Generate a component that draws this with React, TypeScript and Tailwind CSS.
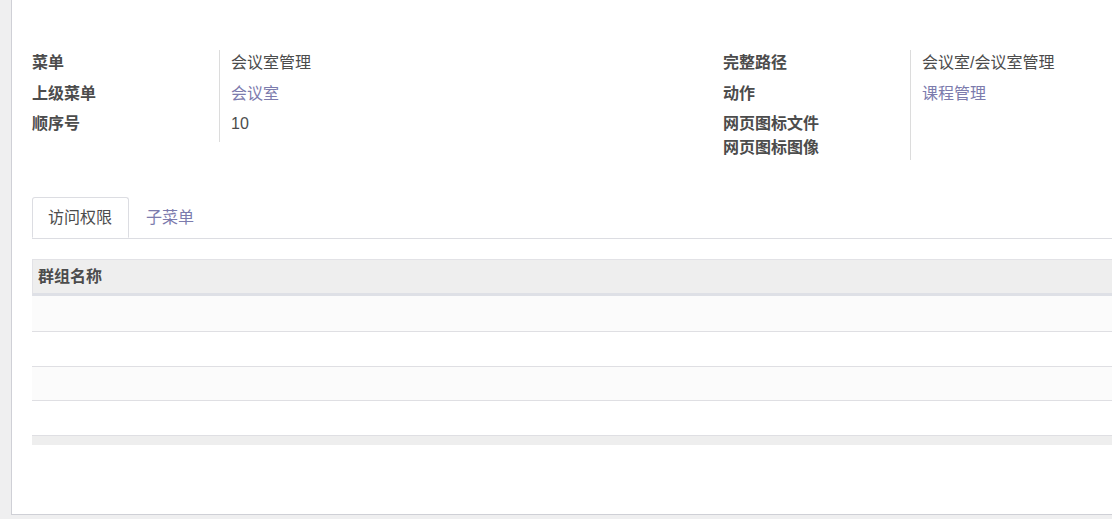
import React from "react";

const font = {
  fontFamily: '"Liberation Sans", "Noto Sans CJK SC", sans-serif',
};

function Label({ text, h, pt }: { text: string; h: string; pt: string }) {
  return (
    <div className={`${h} ${pt} text-[16px] leading-[21px] font-bold text-[#4c4c4c]`}>{text}</div>
  );
}

export default function App() {
  return (
    <div
      className="flex w-[1112px] h-[519px] overflow-hidden bg-[#efeff0]"
      style={font}
    >
      <div className="w-[11px] shrink-0" />
      <div className="w-[1420px] shrink-0 h-[515px] bg-white border-l border-b border-[#cfd0d6] pt-[50px] pl-[20px]">
        {/* info groups */}
        <div className="flex items-start">
          <div className="w-[691px] flex items-start">
            <div className="w-[187px]">
              <Label text="菜单" h="h-[31px]" pt="pt-[2px]" />
              <Label text="上级菜单" h="h-[31px]" pt="pt-[2px]" />
              <Label text="顺序号" h="h-[31px]" pt="pt-[1px]" />
            </div>
            <div className="border-l border-[#dcdcdc] pl-[11px] text-[16px] leading-[21px] text-[#4c4c4c]">
              <div className="h-[31px] pt-[2px]">会议室管理</div>
              <div className="h-[31px] pt-[2px] text-[#7c7bad]">会议室</div>
              <div className="h-[30px] pt-[1px]">10</div>
            </div>
          </div>
          <div className="w-[691px] flex items-start">
            <div className="w-[187px]">
              <Label text="完整路径" h="h-[31px]" pt="pt-[2px]" />
              <Label text="动作" h="h-[31px]" pt="pt-[2px]" />
              <Label text="网页图标文件" h="h-[25px]" pt="pt-[1px]" />
              <Label text="网页图标图像" h="h-[23px]" pt="pt-0" />
            </div>
            <div className="border-l border-[#dcdcdc] pl-[11px] text-[16px] leading-[21px] text-[#4c4c4c]">
              <div className="h-[31px] pt-[2px]">会议室/会议室管理</div>
              <div className="h-[31px] pt-[2px] text-[#7c7bad]">课程管理</div>
              <div className="h-[25px]" />
              <div className="h-[23px]" />
            </div>
          </div>
        </div>

        {/* tabs */}
        <div className="mt-[37px] flex border-b border-[#dcdde2] text-[16px] leading-[21px]">
          <div className="h-[41px] -mb-px pl-[15px] pr-[16px] border border-[#dcdde2] border-b-white bg-white rounded-t-[3px] flex items-center text-[#4c4c4c]">
            访问权限
          </div>
          <div className="h-[41px] px-[17px] flex items-center text-[#7c7bad]">子菜单</div>
        </div>

        {/* table */}
        <div className="mt-[20px]">
          <div className="h-[37px] border-t border-l border-[#e2e2e6] border-b-[3px] border-b-[#dee0e6] bg-[#eeeeee] pl-[5px] flex items-center text-[16px] leading-[21px] font-bold text-[#4c4c4c]">
            群组名称
          </div>
          <div className="h-[36px] bg-[#fbfbfb] border-b border-[#dfdfe3]" />
          <div className="h-[35px] bg-white border-b border-[#dfdfe3]" />
          <div className="h-[34px] bg-[#fbfbfb] border-b border-[#dfdfe3]" />
          <div className="h-[35px] bg-white border-b border-[#dfdfe3]" />
          <div className="h-[9px] bg-[#eeeeee]" />
        </div>
      </div>
    </div>
  );
}
